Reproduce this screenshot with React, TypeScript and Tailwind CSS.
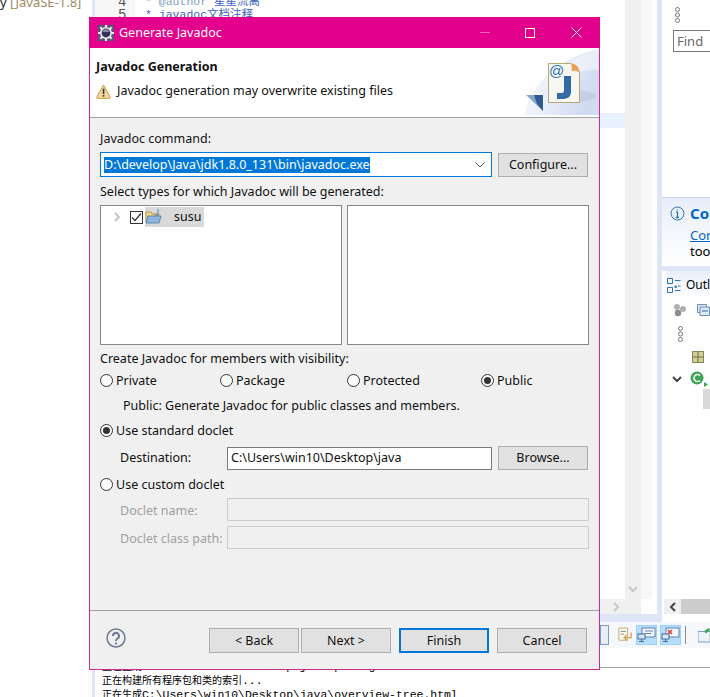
import React from 'react';

const FONT = "font-['Noto_Sans','Noto_Sans_CJK_SC',sans-serif]";
const MONO = "font-['Liberation_Mono','Noto_Sans_CJK_SC',monospace]";

const Radio = ({ label, checked, width }: { label: string; checked?: boolean; width?: string }) => (
  <div className={`flex items-center ${width ?? ''}`}>
    <span className="flex h-[13px] w-[13px] shrink-0 items-center justify-center rounded-full border border-[#333333] bg-white">
      {checked && <span className="h-[7px] w-[7px] rounded-full bg-[#333333]" />}
    </span>
    <span className="ml-[3px] mt-[2px]">{label}</span>
  </div>
);

const Btn = ({ label, focused, className = '' }: { label: string; focused?: boolean; className?: string }) => (
  <div
    className={`flex w-[90px] items-center justify-center bg-[#e1e1e1] ${
      focused ? 'border-2 border-[#0078d7]' : 'border border-[#adadad]'
    } ${className}`}
  >
    {label}
  </div>
);

const GearIcon = () => (
  <svg width="16" height="16" viewBox="0 0 16 16">
    <rect width="16" height="16" fill="#5a5178" />
    <g stroke="#e8e8e8" strokeWidth="2.2">
      <path d="M8 0v16M0 8h16M2.3 2.3l11.4 11.4M13.7 2.3L2.3 13.7" />
    </g>
    <circle cx="8" cy="8" r="6" fill="#e8e8e8" />
    <circle cx="8" cy="8" r="4.4" fill="#34305a" />
    <path d="M4.5 7a3.6 3.6 0 0 1 7 0z" fill="#8d88a8" />
  </svg>
);

const WarnIcon = () => (
  <svg width="15" height="15" viewBox="0 0 15 15">
    <path d="M7.5 1 14.3 13.2a.8.8 0 0 1-.7 1.2H1.4a.8.8 0 0 1-.7-1.2z" fill="#f6d79a" stroke="#c99a50" />
    <rect x="6.7" y="4.6" width="1.7" height="5.4" fill="#3a3a3a" />
    <rect x="6.7" y="11" width="1.7" height="1.7" fill="#3a3a3a" />
  </svg>
);

const WizardBanner = () => (
  <svg width="75" height="66" viewBox="0 0 75 66">
    <defs>
      <linearGradient id="banner" x1="0" y1="0" x2="1" y2="0.3">
        <stop offset="0" stopColor="#ffffff" />
        <stop offset="1" stopColor="#d0daf1" />
      </linearGradient>
    </defs>
    <path d="M0 66C8 32 38 8 75 0V66z" fill="url(#banner)" />
    <path d="M30 30C45 24 60 21 75 21V0C55 5 40 15 30 30z" fill="#ffffff" opacity="0.45" />
    <ellipse cx="52" cy="47" rx="20" ry="6" fill="#c3c9de" opacity="0.7" />
    <path d="M2 46H19V62z" fill="#8aa5cc" />
    <path d="M10 46H19V62L13 55z" fill="#2f5a92" />
    <path d="M24.500 14.500H47L55.500 23V53.500H24.500z" fill="#f6f6f2" stroke="#b5a878" />
    <path d="M47 14.500c5 0 8.500 4 8.500 9-3-2-6-2-8-1 .5-3 .5-6-.5-8z" fill="#e8a256" />
    <text x="25" y="27" fontSize="15" fontFamily="Liberation Sans" fill="#2f74b4">@</text>
    <path d="M40 27H47V43C47 48 43 50 39 50H33V44H38C39.500 44 40 43 40 41z" fill="#336aa6" />
  </svg>
);

const FolderIcon = () => (
  <svg width="17" height="16" viewBox="0 0 17 16">
    <path d="M1 3h5l1 2h7v8H1z" fill="#f3d488" stroke="#b79450" />
    <path d="M3 7h13l-2 7H1z" fill="#8fb5dd" stroke="#5b86b5" />
    <path d="M13 0v5a1.500 1.500 0 0 1-3 0" fill="none" stroke="#4a7db5" />
  </svg>
);

const ChainIcon = () => (
  <svg width="7" height="16" viewBox="0 0 7 16" fill="none" stroke="#777777">
    <circle cx="3.500" cy="2.500" r="2" />
    <circle cx="3.500" cy="8" r="2" />
    <circle cx="3.500" cy="13.500" r="2" />
  </svg>
);

const Chevron = ({ d, color = '#c6c6c6' }: { d: string; color?: string }) => (
  <svg width="10" height="10" viewBox="0 0 10 10" fill="none" stroke={color} strokeWidth="2">
    <path d={d} />
  </svg>
);

const ScreenIcon = ({ red }: { red?: boolean }) => (
  <div className="flex h-[20px] w-[23px] items-center justify-center border border-[#99d1ff] bg-[#b8dcfb]">
    <svg width="19" height="16" viewBox="0 0 19 16">
      <rect x="5" y="1" width="13" height="9" fill="#f4f7fb" stroke="#5e82ad" />
      {red ? <path d="M7 3l4 4M11 3l-4 4" stroke="#d9403a" strokeWidth="1.600" /> : <path d="M8 4h8M8 6.500h6" stroke="#5e82ad" />}
      <rect x="1" y="7" width="7" height="5" fill="#dbe7f3" stroke="#3f6a99" />
      <path d="M2 14.500h5M4.500 12v2" stroke="#3f6a99" />
    </svg>
  </div>
);

const Background = () => (
  <div className={`flex h-[697px] w-[710px] bg-white text-[13px] text-black ${FONT}`}>
    <div className="w-[92px] shrink-0 overflow-hidden">
      <div className="-mt-[7px] whitespace-nowrap text-[#9e8a5e]">
        <span className="text-[#222222]">y </span>[JavaSE-1.8]
      </div>
    </div>
    <div className="flex min-w-0 flex-1 flex-col">
      <div className="flex h-[622px]">
        <div className="w-[3px] bg-[#dfe5f5]" />
        <div className="flex w-[562px] shrink-0 flex-col">
          <div className="flex min-h-0 flex-1">
            <div className="flex w-[530px] flex-col">
              <div className={`flex h-[113px] ${MONO}`}>
                <div className="w-[40px] overflow-hidden bg-[#f7f7f7] pl-[23px] text-[14px] text-[#555555]">
                  <div className="-mt-[6px] h-[14px] leading-[16px]">4</div>
                  <div className="h-[9px] leading-[14px]">5</div>
                </div>
                <div className="h-[17px] overflow-hidden pl-[10px] text-[11.5px] text-[#3f5fbf]">
                  <div className="-mt-[6px] h-[14px] whitespace-nowrap leading-[16px]">
                    <span className="text-[#7f9fbf]"> * @author </span>星星流离
                  </div>
                  <div className="h-[9px] whitespace-nowrap leading-[14px]">* javadoc文档注释</div>
                </div>
              </div>
              <div className="h-[15px] bg-[#e8f2fe]" />
            </div>
            <div className="flex w-[16px] flex-col items-center justify-end bg-[#f0f0f0] pb-[5px]">
              <Chevron d="M1 3l4 4 4-4" />
            </div>
            <div className="w-[11px] bg-[#f7f7f7]" />
            <div className="w-[5px]" />
          </div>
          <div className="flex h-[15px] w-[546px] items-center justify-end bg-[#f0f0f0] pr-[20px]">
            <Chevron d="M3 1l4 4-4 4" />
          </div>
          <div className="h-[8px] bg-[#dfe5f5]" />
        </div>
        <div className="w-[5px] bg-[#dfe5f5]" />
        <div className="flex w-[48px] shrink-0 flex-col">
          <div className="flex h-[197px] flex-col pl-[11px] pt-[7px]">
            <div className="pl-[1px]"><ChainIcon /></div>
            <div className="mt-[7px] h-[22px] w-[37px] border border-r-0 border-[#7a7a7a] pl-[3px] leading-[20px] text-[#666666]">Find</div>
          </div>
          <div className="h-[69px] overflow-hidden rounded-bl-[5px] border-t border-[#c5d2ea] bg-gradient-to-b from-[#e8eef9] to-white pl-[8px] pt-[4px]">
            <div className="flex items-center">
              <svg className="shrink-0" width="15" height="15" viewBox="0 0 15 15" fill="none" stroke="#2f74b4">
                <circle cx="7.500" cy="7.500" r="6.500" />
                <path d="M7.500 6v5M6 11.500h3M6 6h1.500M7.500 3.500v1" strokeWidth="1.300" />
              </svg>
              <span className="ml-[5px] text-[15px] font-bold text-[#0066cc]">Cor</span>
            </div>
            <div className="mt-[2px] pl-[20px] leading-[16px] text-[#0066cc] underline">Cor</div>
            <div className="pl-[20px] leading-[17px]">too</div>
          </div>
          <div className="h-[5px] bg-[#dfe5f5]" />
          <div className="flex min-h-0 flex-1 flex-col pl-[5px]">
            <div className="flex h-[28px] items-center bg-gradient-to-b from-[#e8eef9] to-white">
              <svg className="shrink-0" width="14" height="15" viewBox="0 0 14 15" fill="none" stroke="#2f74b4">
                <path d="M.5.500h5v5h-5zM.5 9.500h5v5h-5zM8 2.500h5.500M8 8h1.500v1.500H8zM11 8h2.500M8 12.500h5.500" />
              </svg>
              <span className="ml-[5px] text-[12px]">Outl</span>
            </div>
            <div className="flex h-[22px] items-center gap-[10px] pl-[6px]">
              <svg className="shrink-0" width="14" height="14" viewBox="0 0 14 14" fill="#b0b0b0"><circle cx="4" cy="4" r="3" /><circle cx="10" cy="6" r="3" /><circle cx="5" cy="10" r="3.200" fill="#8c8c8c" /></svg>
              <svg className="shrink-0" width="13" height="12" viewBox="0 0 13 12" fill="#dfe9f5" stroke="#6f8fb2"><path d="M.5.500h9v8h-9z" /><path d="M3 3h9.500v8.500H3z" /><path d="M5 7h6" stroke="#336aa6" /></svg>
            </div>
            <div className="flex h-[25px] items-center pl-[10px]"><ChainIcon /></div>
            <div className="flex h-[22px] items-center pl-[25px]">
              <svg width="12" height="12" viewBox="0 0 12 12"><rect x=".5" y=".5" width="11" height="11" fill="#cfcf9c" stroke="#8a8a5a" /><path d="M6 0v12M0 6h12" stroke="#7a6a3a" /></svg>
            </div>
            <div className="flex h-[21px] items-center pl-[5px]">
              <Chevron d="M1 3l4 4 4-4" color="#444444" />
              <svg className="ml-[8px] shrink-0" width="18" height="16" viewBox="0 0 18 16">
                <circle cx="7" cy="7" r="6.500" fill="#3aa655" />
                <path d="M10 4.500a3.500 3.500 0 1 0 0 5" fill="none" stroke="#fff" strokeWidth="1.600" />
                <path d="M14 11l4 2.500-4 2.500z" fill="#3aa655" />
              </svg>
            </div>
            <div className="ml-[36px] h-[20px] bg-[#d9d9d9]" />
            <div className="flex-1" />
            <div className="-ml-[3px] flex h-[15px] items-center">
              <div className="flex h-full w-[17px] items-center justify-center bg-[#f0f0f0]">
                <Chevron d="M7 1L3 5l4 4" color="#444444" />
              </div>
              <div className="h-full flex-1 bg-[#cdcdcd]" />
            </div>
            <div className="h-[8px]" />
          </div>
        </div>
      </div>
      <div className="flex h-[26px] items-center gap-[3px] bg-[#f5f7fb] pl-[508px]">
        <div className="h-[20px] w-[10px] border border-[#7f99b8] bg-[#e8edf5]" />
        <svg className="ml-[6px] mr-[1px]" width="16" height="18" viewBox="0 0 16 18">
          <path d="M1 1h10v14H1z" fill="#fbf6e6" stroke="#b8a878" />
          <path d="M3 5h6M3 8h4" stroke="#7a8aa0" />
          <path d="M15 6v6H8M10 9l-3 3 3 3" fill="none" stroke="#d2a85a" strokeWidth="1.600" />
        </svg>
        <ScreenIcon />
        <ScreenIcon red />
        <div className="ml-[1px] h-[18px] w-px bg-[#8a8a8a]" />
        <svg className="ml-[9px]" width="14" height="16" viewBox="0 0 14 16">
          <rect y="4" width="14" height="12" fill="#eef3f8" stroke="#6f8fb2" />
          <path d="M8 5l5-4" stroke="#3aa655" strokeWidth="3" />
        </svg>
      </div>
      <div className="h-[20px] border-b border-[#a0a0a0]" />
      <div className="flex min-h-0 flex-1">
        <div className="w-[3px] bg-[#dfe5f5]" />
        <div className={`flex-1 overflow-hidden pl-[7px] text-[11.45px] leading-[13px] ${MONO}`}>
          <div className="-mt-[8px] h-[13px] whitespace-nowrap"><span className="text-[10px]">正在生成</span>C:\Users\win10\Desktop\java\package-tree.html</div>
          <div className="mt-[1px] whitespace-nowrap"><span className="text-[10px]">正在构建所有程序包和类的索引</span>...</div>
          <div className="whitespace-nowrap"><span className="text-[10px]">正在生成</span>C:\Users\win10\Desktop\java\overview-tree.html</div>
        </div>
      </div>
    </div>
  </div>
);

export default function App() {
  return (
    <div className="relative h-[697px] w-[710px] overflow-hidden">
      <Background />
      <div className={`absolute left-[89px] top-[17px] flex h-[653px] w-[511px] flex-col border border-[#c92d92] bg-[#f0f0f0] text-[12.5px] leading-[16px] text-[#111111] ${FONT}`}>
        <div className="-ml-px -mr-px -mt-px flex h-[31px] shrink-0 items-center bg-[#e3008c] pl-[9px] text-white">
          <GearIcon />
          <span className="ml-[5px]">Generate Javadoc</span>
          <div className="ml-auto flex items-center pr-[18px]">
            <div className="h-px w-[10px] bg-[#ee66ba]" />
            <div className="ml-[35px] h-[10px] w-[10px] border border-white" />
            <svg className="ml-[36px]" width="11" height="11" viewBox="0 0 11 11" stroke="#ffffff">
              <path d="M.5.500l10 10M10.500.500l-10 10" />
            </svg>
          </div>
        </div>

        <div className="relative flex h-[70px] shrink-0 flex-col border-b border-[#a0a0a0] bg-white pl-[6px]">
          <div className="mt-[11px] font-bold">Javadoc Generation</div>
          <div className="mt-[8px] flex items-center">
            <WarnIcon />
            <span className="ml-[6px]">Javadoc generation may overwrite existing files</span>
          </div>
          <div className="absolute bottom-[2px] right-0">
            <WizardBanner />
          </div>
        </div>

        <div className="flex min-h-0 flex-1 flex-col pl-[10px] pr-[10px]">
          <div className="flex h-[34px] items-end pb-[5px]">Javadoc command:</div>
          <div className="flex h-[25px] gap-[6px]">
            <div className="flex w-[392px] items-center border border-[#0078d7] bg-white pl-[3px] pr-[6px]">
              <span className="bg-[#0078d7] text-white">D:\develop\Java\jdk1.8.0_131\bin\javadoc.exe</span>
              <svg className="ml-auto" width="10" height="6" viewBox="0 0 10 6" fill="none" stroke="#555555">
                <path d="M.5.500 5 5 9.500.500" />
              </svg>
            </div>
            <Btn label="Configure..." className="mt-[1px] h-[24px]" />
          </div>
          <div className="flex h-[28px] items-center pt-[2px]">Select types for which Javadoc will be generated:</div>
          <div className="flex h-[140px] gap-[5px]">
            <div className="h-full w-[242px] border border-[#828790] bg-white pl-[11px] pt-[1px]">
              <div className="flex h-[20px] items-center">
                <Chevron d="M3 1l4 4-4 4" />
                <span className="ml-[8px] flex h-[13px] w-[13px] items-center justify-center border border-[#333333] bg-white">
                  <svg width="11" height="11" viewBox="0 0 11 11" fill="none" stroke="#333333" strokeWidth="1.300">
                    <path d="M1 5.500 4 8.500 10 1.500" />
                  </svg>
                </span>
                <span className="ml-[2px] flex h-[20px] w-[59px] items-center bg-[#d9d9d9]">
                  <FolderIcon />
                  <span className="ml-[12px]">susu</span>
                </span>
              </div>
            </div>
            <div className="h-full w-[242px] border border-[#828790] bg-white" />
          </div>
          <div className="flex h-[26px] items-center pt-[2px]">Create Javadoc for members with visibility:</div>
          <div className="flex h-[18px] items-center">
            <Radio label="Private" width="w-[120px]" />
            <Radio label="Package" width="w-[127px]" />
            <Radio label="Protected" width="w-[134px]" />
            <Radio label="Public" checked />
          </div>
          <div className="flex h-[32px] items-center pl-[23px] pt-[2px]">Public: Generate Javadoc for public classes and members.</div>
          <div className="flex h-[18px] items-center">
            <Radio label="Use standard doclet" checked />
          </div>
          <div className="mt-[7px] flex h-[24px] items-center">
            <div className="w-[127px] shrink-0 pl-[20px]">Destination:</div>
            <div className="flex h-[23px] w-[265px] items-center border border-[#7a7a7a] bg-white pl-[3px]">C:\Users\win10\Desktop\java</div>
            <Btn label="Browse..." className="ml-[6px] h-[24px]" />
          </div>
          <div className="flex h-[28px] items-center">
            <Radio label="Use custom doclet" />
          </div>
          <div className="flex h-[23px] items-center text-[#a0a0a0]">
            <div className="w-[127px] shrink-0 pl-[20px] pt-[2px]">Doclet name:</div>
            <div className="h-[23px] flex-1 border border-[#cccccc]" />
          </div>
          <div className="mt-[5px] flex h-[23px] items-center text-[#a0a0a0]">
            <div className="w-[127px] shrink-0 pl-[20px] pt-[2px]">Doclet class path:</div>
            <div className="h-[23px] flex-1 border border-[#cccccc]" />
          </div>
        </div>

        <div className="flex h-[59px] shrink-0 items-start border-t border-[#a0a0a0] pl-[16px] pt-[17px]">
          <svg width="20" height="20" viewBox="0 0 20 20" fill="none" stroke="#6d7a90" strokeWidth="1.500">
            <circle cx="10" cy="10" r="9" />
            <path d="M7 8a3 3 0 1 1 4.500 2.500c-1 .6-1.500 1-1.500 2.500" strokeWidth="2" />
            <path d="M10 14.500v2" strokeWidth="2" />
          </svg>
          <div className="ml-[83px] flex">
            <Btn label="< Back" className="h-[25px]" />
            <Btn label="Next >" className="ml-[2px] h-[25px]" />
            <Btn label="Finish" focused className="ml-[8px] h-[25px]" />
            <Btn label="Cancel" className="ml-[8px] h-[25px]" />
          </div>
        </div>
      </div>
    </div>
  );
}
